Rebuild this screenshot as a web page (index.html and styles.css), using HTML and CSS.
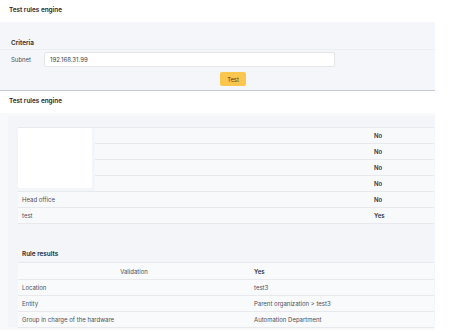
FILE: index.html
```html
<!DOCTYPE html>
<html>
<head>
<meta charset="utf-8">
<link rel="stylesheet" href="styles.css">
</head>
<body>
<section class="dlg dlg-first">
  <header class="dlg-head">Test rules engine</header>
  <div class="first-body">
    <div class="crit-head">Criteria</div>
    <div class="crit-body">
      <div class="field-row">
        <label class="field-label">Subnet</label>
        <div class="field-input">192.168.31.99</div>
      </div>
      <div class="btn-row">
        <button class="btn-test">Test</button>
      </div>
    </div>
  </div>
</section>
<section class="dlg dlg-second">
  <header class="dlg-head">Test rules engine</header>
  <div class="second-body">
    <div class="card">
      <table class="crit-table">
        <tr>
          <td class="pic-cell" rowspan="4"><div class="pic"></div></td>
          <td class="lbl"></td>
          <td class="val">No</td>
        </tr>
        <tr><td class="lbl"></td><td class="val">No</td></tr>
        <tr><td class="lbl"></td><td class="val">No</td></tr>
        <tr><td class="lbl"></td><td class="val">No</td></tr>
        <tr><td class="lbl" colspan="2">Head office</td><td class="val">No</td></tr>
        <tr><td class="lbl" colspan="2">test</td><td class="val">Yes</td></tr>
      </table>
      <h3 class="res-title">Rule results</h3>
      <table class="res-table">
        <tr class="res-head"><td class="res-lbl center">Validation</td><td class="res-val strong">Yes</td></tr>
        <tr><td class="res-lbl">Location</td><td class="res-val">test3</td></tr>
        <tr><td class="res-lbl">Entity</td><td class="res-val">Parent organization &gt; test3</td></tr>
        <tr><td class="res-lbl">Group in charge of the hardware</td><td class="res-val">Automation Department</td></tr>
      </table>
    </div>
  </div>
</section>
</body>
</html>
```
FILE: styles.css
```css
* { box-sizing: border-box; }
html, body { margin: 0; padding: 0; background: #ffffff; }
body {
  width: 474px;
  height: 333px;
  overflow: hidden;
  font-family: Inter, "Noto Sans", sans-serif;
  font-size: 6px;
  color: #4a505a;
}
.dlg { width: 435px; }
.dlg-head {
  height: 22px;
  display: flex;
  align-items: center;
  padding: 0 0 2px 9px;
  font-weight: 600;
  font-size: 6.4px;
  color: #252a33;
  background: #ffffff;
}
.first-body {
  height: 69px;
  background: #f5f6f9;
  border-bottom: 1px solid #c4c7cd;
}
.crit-head {
  height: 28px;
  display: flex;
  align-items: flex-end;
  padding: 0 0 2px 11px;
  font-weight: 600;
  font-size: 6.4px;
  color: #252a33;
  border-bottom: 1px solid #eceef2;
}
.crit-body { padding-top: 2px; }
.field-row {
  display: flex;
  align-items: center;
  height: 15px;
}
.field-label { width: 44px; padding-left: 11px; }
.field-input {
  width: 291px;
  height: 15px;
  background: #ffffff;
  border: 1px solid #e4e6ea;
  border-radius: 2px;
  padding-left: 5px;
  display: flex;
  align-items: center;
  color: #3a3f48;
}
.btn-row { padding: 5px 0 0 220px; }
.btn-test {
  width: 26px;
  height: 14px;
  border: 0;
  border-radius: 2px;
  background: #fbc64e;
  color: #4d3f1c;
  font-family: inherit;
  font-size: 5.8px;
  padding: 0;
}
.second-body {
  background: #f8f9fb;
  height: 217px;
  padding: 3px 0 3px 8px;
}
.card {
  background: #f4f5f8;
  height: 100%;
  padding: 11px 1px 0 10px;
}
table { border-collapse: collapse; width: 416px; }
.crit-table td {
  height: 16px;
  padding: 0 4px;
  border-bottom: 1px solid #e7e9ed;
  background: #f8f9fb;
}
.crit-table { border-top: 1px solid #e7e9ed; }
.crit-table td.pic-cell {
  width: 77px;
  padding: 0 3px 2px 0;
  vertical-align: top;
  background: #f4f5f8;
  border-bottom: 1px solid #e7e9ed;
}
.pic {
  width: 74px;
  height: 60px;
  background: #ffffff;
  border-radius: 2px;
}
.crit-table td.val {
  width: 64px;
  font-weight: 600;
  color: #2d323b;
}
.res-title {
  margin: 26px 0 0 4px;
  height: 12px;
  font-size: 6.4px;
  font-weight: 600;
  color: #252a33;
}
.res-table { border-top: 1px solid #e7e9ed; }
.res-table td {
  height: 16px;
  padding: 0 4px;
  border-bottom: 1px solid #e7e9ed;
  background: #f9fafb;
}
.res-head td { height: 17px; }
.res-lbl { width: 232px; }
.center { text-align: center; }
.strong { font-weight: 600; color: #2d323b; }
```
